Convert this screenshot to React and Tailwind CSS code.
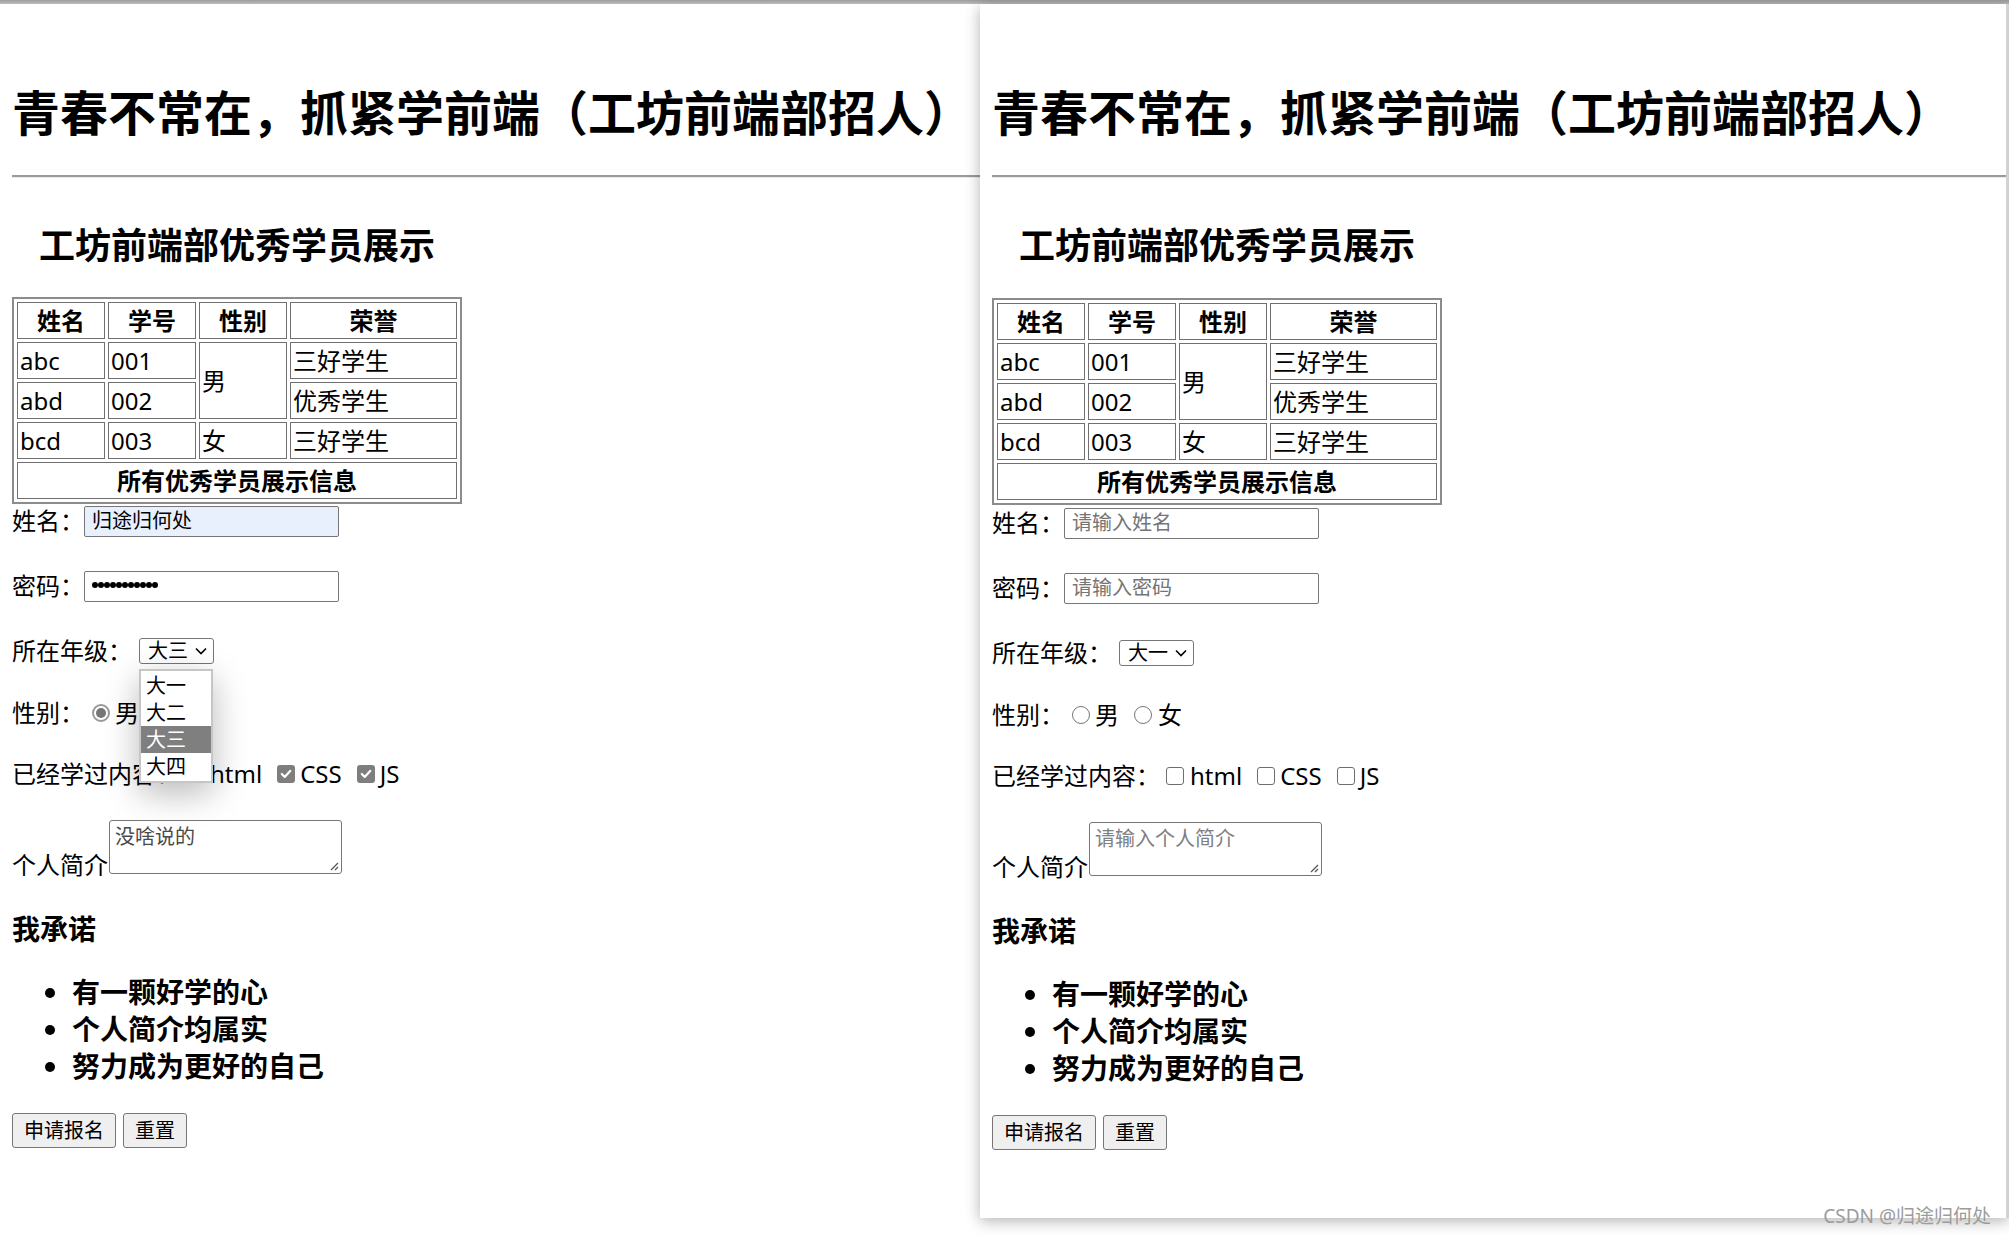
import React from "react";

const FONT = "font-['Noto_Sans','Noto_Sans_CJK_SC',sans-serif]";

function Radio({ checked }) {
  if (checked) {
    return (
      <span className="inline-flex items-center justify-center w-[18px] h-[18px] rounded-full border-2 border-[#9a9a9a] bg-white shrink-0">
        <span className="w-[10px] h-[10px] rounded-full bg-[#767676]" />
      </span>
    );
  }
  return <span className="inline-block w-[18px] h-[18px] rounded-full border-[1.5px] border-[#767676] bg-white shrink-0" />;
}

function Checkbox({ checked }) {
  if (checked) {
    return (
      <span className="inline-flex items-center justify-center w-[18px] h-[18px] rounded-[3px] bg-[#7e7e7e] shrink-0">
        <svg width="12" height="10" viewBox="0 0 12 10">
          <polyline points="1.8,5 4.7,7.9 10.2,1.9" fill="none" stroke="#ffffff" strokeWidth="2.2" strokeLinecap="round" strokeLinejoin="round" />
        </svg>
      </span>
    );
  }
  return <span className="inline-block w-[18px] h-[18px] rounded-[3px] border-[1.5px] border-[#6e6e6e] bg-white shrink-0" />;
}

function Grip() {
  return (
    <svg className="absolute right-[2px] bottom-[2px]" width="10" height="10" viewBox="0 0 10 10">
      <line x1="9" y1="2" x2="2" y2="9" stroke="#555" strokeWidth="1.2" />
      <line x1="9" y1="6" x2="6" y2="9" stroke="#555" strokeWidth="1.2" />
    </svg>
  );
}

function Table({ right }) {
  const td = "border border-[#707070] h-[37px] px-[2px] py-0 leading-[30px] text-left font-normal";
  const th = "border border-[#707070] h-[37px] px-[2px] py-0 leading-[30px] text-center font-bold";
  return (
    <div className="flex flex-col w-[450px] mt-[44px]">
      <div className="text-[36px] leading-[48px] font-bold text-center whitespace-nowrap">工坊前端部优秀学员展示</div>
      <table className={right ? "mt-[28px] border-separate border-spacing-[3px] border-2 border-[#8c8c8c] text-[24px]" : "mt-[27px] border-separate border-spacing-[3px] border-2 border-[#8c8c8c] text-[24px]"}>
        <thead>
          <tr>
            <th className={th + " w-[88px]"}>姓名</th>
            <th className={th + " w-[88px]"}>学号</th>
            <th className={th + " w-[88px]"}>性别</th>
            <th className={th + " w-[167px]"}>荣誉</th>
          </tr>
        </thead>
        <tbody>
          <tr>
            <td className={td}>abc</td>
            <td className={td}>001</td>
            <td className={td} rowSpan={2}>男</td>
            <td className={td}>三好学生</td>
          </tr>
          <tr>
            <td className={td}>abd</td>
            <td className={td}>002</td>
            <td className={td}>优秀学生</td>
          </tr>
          <tr>
            <td className={td}>bcd</td>
            <td className={td}>003</td>
            <td className={td}>女</td>
            <td className={td}>三好学生</td>
          </tr>
        </tbody>
        <tfoot>
          <tr>
            <th className={th} colSpan={4}>所有优秀学员展示信息</th>
          </tr>
        </tfoot>
      </table>
    </div>
  );
}

function Panel({ right }) {
  return (
    <div className="flex flex-col pl-[12px] pt-[77px]">
      <h1 className="text-[48px] leading-[64px] h-[64px] font-bold whitespace-nowrap">青春不常在，抓紧学前端（工坊前端部招人）</h1>
      <div className="mt-[30px] h-0 border-t-2 border-b border-t-[#9a9a9a] border-b-[#ececec]" />
      <Table right={right} />

      <div className={right ? "flex flex-col text-[24px] mt-[1px]" : "flex flex-col text-[24px]"}>
        {/* 姓名 */}
        <div className="flex items-center h-[34px] leading-[34px]">
          <span>姓名：</span>
          {right ? (
            <div className="flex items-center w-[255px] h-[31px] border border-[#767676] rounded-[2px] bg-white pl-[7px] text-[20px] leading-[26px] text-[#757575]">请输入姓名</div>
          ) : (
            <div className="flex items-center w-[255px] h-[31px] border border-[#767676] rounded-[2px] bg-[#e8f0fe] pl-[7px] text-[20px] leading-[26px] text-black">归途归何处</div>
          )}
        </div>

        {/* 密码 */}
        <div className="flex items-center h-[34px] leading-[34px] mt-[31px]">
          <span>密码：</span>
          {right ? (
            <div className="flex items-center w-[255px] h-[31px] border border-[#767676] rounded-[2px] bg-white pl-[7px] text-[20px] leading-[26px] text-[#757575]">请输入密码</div>
          ) : (
            <div className="flex items-center w-[255px] h-[31px] border border-[#767676] rounded-[2px] bg-white pl-[7px] pb-[3px]">
              {[0, 1, 2, 3, 4, 5, 6, 7, 8, 9, 10].map((i) => (
                <span key={i} className="w-[6px] h-[6px] rounded-full bg-black shrink-0" />
              ))}
            </div>
          )}
        </div>

        {/* 年级 */}
        <div className="flex items-center h-[34px] leading-[34px] mt-[31px]">
          <span>所在年级：</span>
          <div className="ml-[7px] flex items-center justify-between w-[75px] h-[26px] border border-[#767676] rounded-[3px] bg-white pl-[8px] pr-[6px] text-[20px] leading-[24px]">
            <span>{right ? "大一" : "大三"}</span>
            <svg width="12" height="8" viewBox="0 0 12 8">
              <polyline points="1,1.5 6,6.5 11,1.5" fill="none" stroke="#000" strokeWidth="1.6" />
            </svg>
          </div>
        </div>

        {/* 性别 */}
        <div className="flex items-center h-[34px] leading-[34px] mt-[28px]">
          <span>性别：</span>
          <span className="ml-[8px] mr-[5px] flex"><Radio checked={!right} /></span>
          <span>男</span>
          <span className="ml-[15px] mr-[6px] flex"><Radio checked={false} /></span>
          <span>女</span>
        </div>

        {/* 已学内容 */}
        <div className="flex items-center h-[34px] leading-[34px] mt-[27px]">
          <span>已经学过内容：</span>
          <span className="ml-[6px] mr-[6px] flex"><Checkbox checked={false} /></span>
          <span>html</span>
          <span className="ml-[15px] mr-[5px] flex"><Checkbox checked={!right} /></span>
          <span>CSS</span>
          <span className="ml-[15px] mr-[5px] flex"><Checkbox checked={!right} /></span>
          <span>JS</span>
        </div>

        {/* 个人简介 */}
        <div className="flex items-end h-[54px] mt-[29px]">
          <span className="leading-[24px] mb-[-3px]">个人简介</span>
          {right ? (
            <div className="relative ml-px w-[233px] h-[54px] border border-[#767676] rounded-[3px] bg-white pl-[5px] pt-[3px] text-[20px] leading-[26px] text-[#808080]">
              请输入个人简介
              <Grip />
            </div>
          ) : (
            <div className="relative ml-px w-[233px] h-[54px] border border-[#767676] rounded-[3px] bg-white pl-[5px] pt-[3px] text-[20px] leading-[26px] text-[#4a4a4a]">
              没啥说的
              <Grip />
            </div>
          )}
        </div>

        {/* 我承诺 */}
        <div className="mt-[37px] text-[28px] leading-[37px] font-bold">我承诺</div>
        <ul className="mt-[26px] list-disc pl-[60px] text-[28px] leading-[37px] font-bold">
          <li>有一颗好学的心</li>
          <li>个人简介均属实</li>
          <li>努力成为更好的自己</li>
        </ul>

        <div className="flex mt-[28px] gap-[7px]">
          <button className="h-[35px] px-[11px] border border-[#767676] rounded-[3px] bg-[#efefef] text-[20px] leading-[24px] text-black">申请报名</button>
          <button className="h-[35px] px-[11px] border border-[#767676] rounded-[3px] bg-[#efefef] text-[20px] leading-[24px] text-black">重置</button>
        </div>
      </div>
    </div>
  );
}

export default function App() {
  return (
    <div className={"relative w-[2009px] h-[1235px] overflow-hidden bg-white text-black flex flex-col " + FONT}>
      <div className="h-[4px] shrink-0 bg-gradient-to-b from-[#9c9c9c] to-[#bdbdbd]" />
      <div className="flex flex-1 items-start">
        <div className="relative w-[980px] h-[1231px] shrink-0 overflow-hidden">
          <Panel right={false} />
          <div className="absolute left-[139px] top-[665px] w-[74px] border-2 border-[#c6c6c6] bg-white py-px shadow-[0_10px_34px_rgba(0,0,0,0.28)] text-[20px]">
            {["大一", "大二", "大三", "大四"].map((t) => (
              <div key={t} className={t === "大三" ? "h-[27px] leading-[27px] pl-[5px] bg-[#7f7f7f] text-white" : "h-[27px] leading-[27px] pl-[5px] text-black"}>
                {t}
              </div>
            ))}
          </div>
        </div>
        <div className="relative z-10 w-[1029px] h-[1214px] shrink-0 bg-white border-r-[3px] border-[#d2d2d2] shadow-[0_3px_14px_rgba(0,0,0,0.3)] overflow-hidden">
          <Panel right={true} />
        </div>
      </div>
      <div className="absolute right-[18px] bottom-[8px] z-20 text-[19px] leading-[22px] text-[#9c9c9c]">CSDN @归途归何处</div>
    </div>
  );
}
